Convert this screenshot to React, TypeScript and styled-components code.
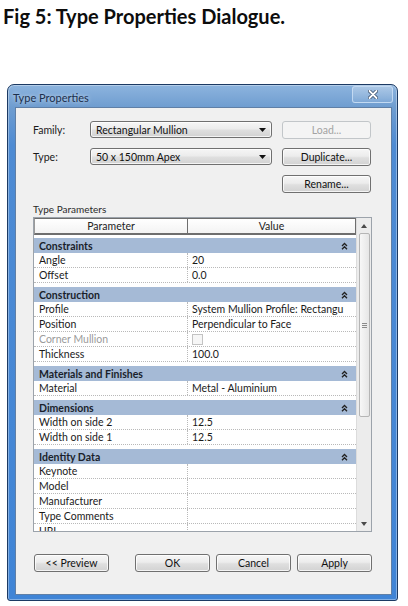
import { FC } from "react";
import styled, { createGlobalStyle } from "styled-components";

const ui = `"Lato", "Open Sans", sans-serif`;

const GlobalStyle = createGlobalStyle`
  body {
    margin: 0;
    background: #ffffff;
    font-family: ${ui};
  }
`;

interface Row {
  name: string;
  value?: string;
  disabled?: boolean;
  check?: boolean;
}

interface Group {
  title: string;
  rows: Row[];
}

const groups: Group[] = [
  {
    title: "Constraints",
    rows: [
      { name: "Angle", value: "20" },
      { name: "Offset", value: "0.0" },
    ],
  },
  {
    title: "Construction",
    rows: [
      { name: "Profile", value: "System Mullion Profile: Rectangu" },
      { name: "Position", value: "Perpendicular to Face" },
      { name: "Corner Mullion", disabled: true, check: true },
      { name: "Thickness", value: "100.0" },
    ],
  },
  {
    title: "Materials and Finishes",
    rows: [{ name: "Material", value: "Metal - Aluminium" }],
  },
  {
    title: "Dimensions",
    rows: [
      { name: "Width on side 2", value: "12.5" },
      { name: "Width on side 1", value: "12.5" },
    ],
  },
  {
    title: "Identity Data",
    rows: [
      { name: "Keynote" },
      { name: "Model" },
      { name: "Manufacturer" },
      { name: "Type Comments" },
      { name: "URL" },
    ],
  },
];

const DropArrow: FC = () => (
  <svg width="7" height="4" viewBox="0 0 7 4">
    <path d="M0 0 H7 L3.5 4 Z" fill="#111" />
  </svg>
);

const Collapse: FC = () => (
  <svg width="7" height="8" viewBox="0 0 7 8">
    <path
      d="M1 4 L3.5 1.5 L6 4 M1 7.2 L3.5 4.7 L6 7.2"
      fill="none"
      stroke="#222"
      strokeWidth="1.3"
    />
  </svg>
);

const CloseGlyph: FC = () => (
  <svg width="10" height="9" viewBox="0 0 10 9">
    <path
      d="M1.5 1 L8.5 8 M8.5 1 L1.5 8"
      stroke="#2a3f5c"
      strokeWidth="3.4"
      strokeLinecap="round"
    />
    <path
      d="M1.5 1 L8.5 8 M8.5 1 L1.5 8"
      stroke="#ffffff"
      strokeWidth="2"
      strokeLinecap="round"
    />
  </svg>
);

const ScrollTriangle: FC<{ up?: boolean }> = ({ up }) => (
  <svg width="6" height="4" viewBox="0 0 6 4">
    <path d={up ? "M0 4 H6 L3 0 Z" : "M0 0 H6 L3 4 Z"} fill="#4a4a4a" />
  </svg>
);

const App: FC = () => {
  return (
    <Page>
      <GlobalStyle />
      <Caption>Fig 5: Type Properties Dialogue.</Caption>
      <Window>
        <TitleBar>
          <TitleText>Type Properties</TitleText>
          <CloseButton>
            <CloseGlyph />
          </CloseButton>
        </TitleBar>
        <Frame>
          <Client>
            <Form>
              <FieldLabel>Family:</FieldLabel>
              <Combo>
                <span>Rectangular Mullion</span>
                <DropArrow />
              </Combo>
              <span />
              <DialogButton $disabled>Load...</DialogButton>

              <FieldLabel>Type:</FieldLabel>
              <Combo>
                <span>50 x 150mm Apex</span>
                <DropArrow />
              </Combo>
              <span />
              <DialogButton>Duplicate...</DialogButton>

              <span />
              <span />
              <span />
              <DialogButton>Rename...</DialogButton>
            </Form>

            <SectionLabel>Type Parameters</SectionLabel>

            <Table>
              <Grid>
                <HeaderRow>
                  <HeaderCell $width={154}>Parameter</HeaderCell>
                  <HeaderCell $width={168}>Value</HeaderCell>
                </HeaderRow>
                {groups.map((g, i) => (
                  <GroupBlock key={g.title} $first={i === 0}>
                    <GroupHeader>
                      <span>{g.title}</span>
                      <Collapse />
                    </GroupHeader>
                    {g.rows.map((r) => (
                      <DataRow key={r.name}>
                        <NameCell $disabled={r.disabled}>{r.name}</NameCell>
                        <ValueCell>
                          {r.check ? <Checkbox /> : r.value}
                        </ValueCell>
                      </DataRow>
                    ))}
                  </GroupBlock>
                ))}
              </Grid>
              <ScrollBar>
                <ScrollArrow>
                  <ScrollTriangle up />
                </ScrollArrow>
                <Thumb>
                  <Grip />
                </Thumb>
                <ScrollTrack />
                <ScrollArrow>
                  <ScrollTriangle />
                </ScrollArrow>
              </ScrollBar>
            </Table>

            <Footer>
              <FooterButton>&lt;&lt; Preview</FooterButton>
              <FooterSpacer />
              <FooterButton>OK</FooterButton>
              <FooterButton>Cancel</FooterButton>
              <FooterButton>Apply</FooterButton>
            </Footer>
          </Client>
        </Frame>
      </Window>
    </Page>
  );
};

const Page = styled.div`
  padding-top: 5px;
  width: 408px;
  height: 606px;
  box-sizing: border-box;
  overflow: hidden;
`;

const Caption = styled.h1`
  margin: 0;
  padding-left: 3px;
  font-family: ${ui};
  font-weight: 700;
  font-size: 20px;
  line-height: 22px;
  color: #0d0d0d;
`;

const Window = styled.div`
  margin: 57px 0 0 7px;
  width: 391px;
  height: 517px;
  box-sizing: border-box;
  display: flex;
  flex-direction: column;
  border: 1px solid #1c3a63;
  border-radius: 7px 7px 3px 3px;
  background: linear-gradient(
    to bottom,
    #8db4de 0px,
    #6f9dd0 22px,
    #4e8bd3 60px,
    #3f84d6 100%
  );
  box-shadow: inset 0 0 0 1px rgba(255, 255, 255, 0.35);
`;

const TitleBar = styled.div`
  height: 22px;
  flex: none;
  display: flex;
  align-items: flex-start;
  padding: 0 4px 0 5px;
`;

const TitleText = styled.span`
  margin-top: 6px;
  font-size: 11px;
  line-height: 13px;
  color: #1b2f4d;
  text-shadow: 0 0 4px rgba(255, 255, 255, 0.7);
`;

const CloseButton = styled.div`
  margin-left: auto;
  margin-top: 1px;
  width: 41px;
  height: 17px;
  box-sizing: border-box;
  display: flex;
  align-items: center;
  justify-content: center;
  border: 1px solid rgba(210, 228, 248, 0.75);
  border-radius: 3px;
  background: linear-gradient(
    to bottom,
    rgba(255, 255, 255, 0.28),
    rgba(255, 255, 255, 0.08)
  );
`;

const Frame = styled.div`
  flex: 1;
  display: flex;
  padding: 0 5px 5px 7px;
`;

const Client = styled.div`
  flex: 1;
  box-sizing: border-box;
  border: 1px solid #5f7fa6;
  background: #f0f0f0;
  display: flex;
  flex-direction: column;
`;

const Form = styled.div`
  display: grid;
  grid-template-columns: 57px 182px 10px 89px;
  grid-auto-rows: 17px;
  row-gap: 10px;
  padding: 13px 0 0 17px;
  align-items: center;
`;

const FieldLabel = styled.span`
  font-size: 10.5px;
  color: #1a1a1a;
`;

const buttonFace = `
  border: 1px solid #707070;
  border-radius: 3px;
  background: linear-gradient(
    to bottom,
    #f6f6f6 0%,
    #ececec 45%,
    #dfdfdf 55%,
    #d2d2d2 100%
  );
  box-shadow: inset 0 0 0 1px rgba(255, 255, 255, 0.75);
`;

const Combo = styled.div`
  height: 17px;
  box-sizing: border-box;
  display: flex;
  align-items: center;
  justify-content: space-between;
  padding: 0 5px 0 5px;
  font-size: 10.5px;
  color: #111;
  ${buttonFace}
`;

const DialogButton = styled.div<{ $disabled?: boolean }>`
  height: 18px;
  box-sizing: border-box;
  display: flex;
  align-items: center;
  justify-content: center;
  font-size: 10.5px;
  color: ${(p) => (p.$disabled ? "#a3a3a3" : "#111")};
  ${(p) =>
    p.$disabled
      ? `
    border: 1px solid #c2c6c9;
    border-radius: 3px;
    background: #f4f4f4;
  `
      : buttonFace}
`;

const SectionLabel = styled.div`
  margin: 9px 0 0 17px;
  height: 16px;
  line-height: 16px;
  font-size: 10px;
  color: #2a2a2a;
`;

const Table = styled.div`
  margin-left: 17px;
  width: 339px;
  height: 315px;
  box-sizing: border-box;
  border: 1px solid #9ca3ab;
  display: flex;
  background: #ffffff;
`;

const Grid = styled.div`
  width: 322px;
  overflow: hidden;
  display: flex;
  flex-direction: column;
`;

const HeaderRow = styled.div`
  display: flex;
  height: 17px;
  flex: none;
`;

const HeaderCell = styled.div<{ $width: number }>`
  width: ${(p) => p.$width}px;
  box-sizing: border-box;
  display: flex;
  align-items: center;
  justify-content: center;
  border: 1px solid #6e6e6e;
  border-bottom-width: 2px;
  border-left-color: #9a9a9a;
  background: linear-gradient(to bottom, #ffffff, #f3f3f3);
  font-size: 10.5px;
  color: #222;
  & + & {
    border-left: none;
  }
`;

const GroupBlock = styled.div<{ $first?: boolean }>`
  margin-top: ${(p) => (p.$first ? 3 : 4)}px;
  flex: none;
`;

const GroupHeader = styled.div`
  height: 15px;
  display: flex;
  align-items: center;
  justify-content: space-between;
  padding: 0 8px 0 5px;
  background: #a5bad6;
  font-size: 10.5px;
  font-weight: 700;
  color: #1a1f2b;
`;

const DataRow = styled.div`
  height: 15px;
  box-sizing: border-box;
  display: flex;
  border-bottom: 1px dotted #b9b9b9;
  font-size: 10.5px;
`;

const NameCell = styled.div<{ $disabled?: boolean }>`
  width: 154px;
  box-sizing: border-box;
  padding-left: 5px;
  display: flex;
  align-items: center;
  border-right: 1px dotted #b9b9b9;
  color: ${(p) => (p.$disabled ? "#9b9b9b" : "#1a1a1a")};
`;

const ValueCell = styled.div`
  flex: 1;
  padding-left: 4px;
  display: flex;
  align-items: center;
  color: #1a1a1a;
  white-space: nowrap;
  overflow: hidden;
`;

const Checkbox = styled.div`
  width: 11px;
  height: 11px;
  box-sizing: border-box;
  border: 1px solid #c3c3c3;
  background: #f6f6f6;
`;

const ScrollBar = styled.div`
  flex: 1;
  display: flex;
  flex-direction: column;
  align-items: center;
  background: #ececec;
  border-left: 1px solid #dcdcdc;
`;

const ScrollArrow = styled.div`
  height: 15px;
  width: 100%;
  flex: none;
  display: flex;
  align-items: center;
  justify-content: center;
`;

const Thumb = styled.div`
  width: 11px;
  height: 184px;
  box-sizing: border-box;
  border: 1px solid #b5b5b5;
  border-radius: 2px;
  background: linear-gradient(to right, #f7f7f7, #e6e6e6);
  display: flex;
  align-items: center;
  justify-content: center;
`;

const Grip = styled.div`
  width: 5px;
  height: 5px;
  background: repeating-linear-gradient(
    to bottom,
    #8a8a8a 0px,
    #8a8a8a 1px,
    transparent 1px,
    transparent 2px
  );
`;

const ScrollTrack = styled.div`
  flex: 1;
`;

const Footer = styled.div`
  display: flex;
  gap: 6px;
  margin-top: 22px;
  padding: 0 18px 0 18px;
`;

const FooterSpacer = styled.div`
  width: 14px;
`;

const FooterButton = styled(DialogButton)`
  width: 75px;
  height: 18px;
`;

export default App;
